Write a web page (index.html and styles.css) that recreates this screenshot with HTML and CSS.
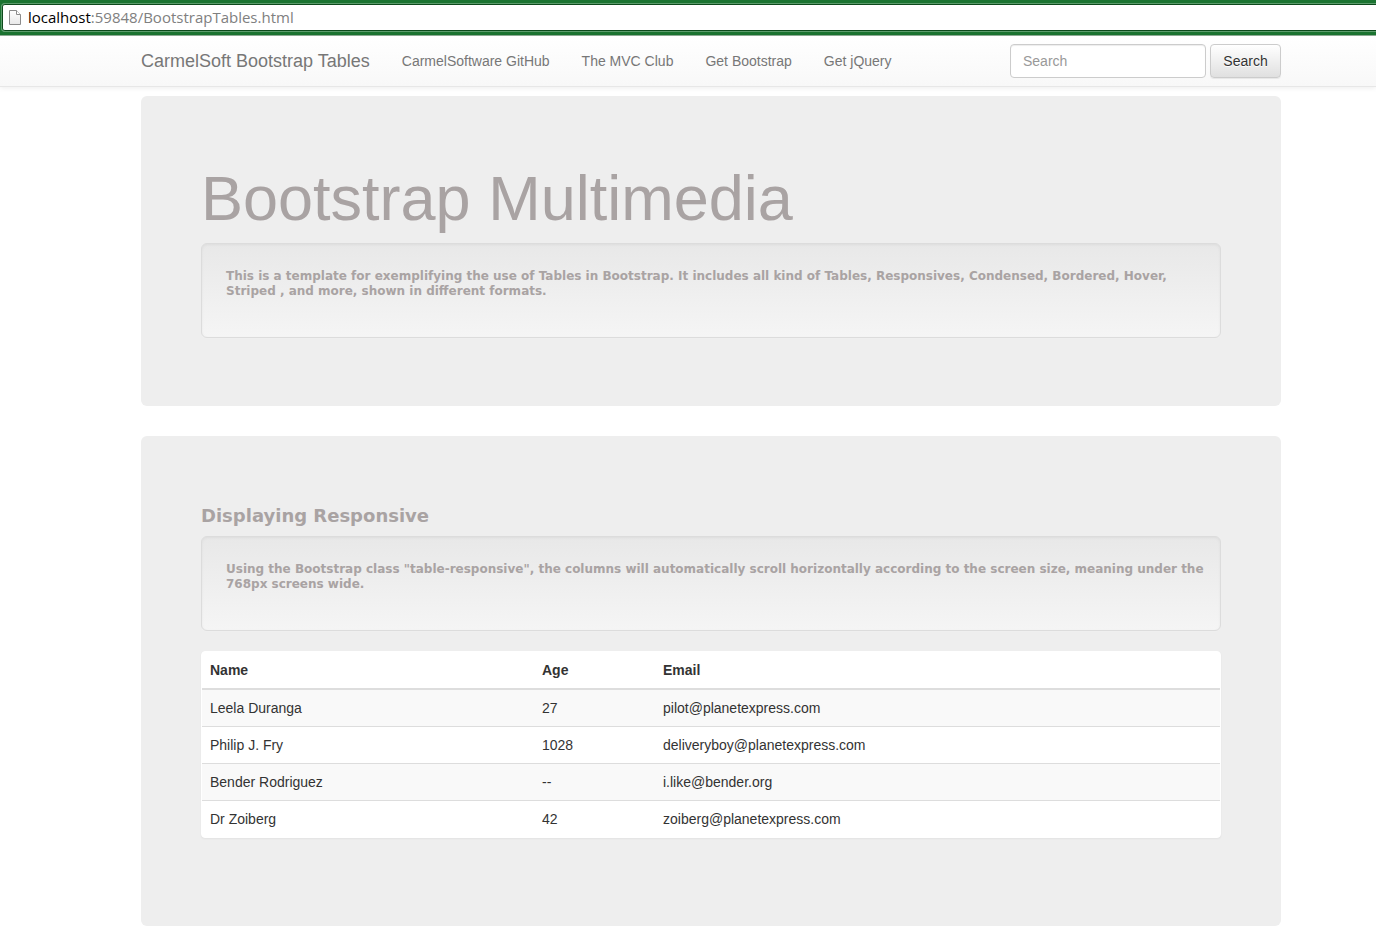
FILE: index.html
```
<!DOCTYPE html>
<html lang="en">
<head>
<meta charset="utf-8">
<title>CarmelSoft Bootstrap Tables</title>
<link rel="stylesheet" href="styles.css">
</head>
<body>
<div class="browser-bar">
  <div class="address">
    <svg class="page-icon" width="12" height="15" viewBox="0 0 12 15" aria-hidden="true">
      <defs><linearGradient id="paper" x1="0" y1="0" x2="0" y2="1"><stop offset="0" stop-color="#fff"/><stop offset="1" stop-color="#e8e8e8"/></linearGradient></defs>
      <path d="M.5.5H7.5L11.5 4.5V14.5H.5Z" fill="url(#paper)" stroke="#8c8c8c"/>
      <path d="M7.5.5V4.5H11.5" fill="#fff" stroke="#8c8c8c"/>
    </svg>
    <span class="url"><span class="host">localhost</span>:59848/BootstrapTables.html</span>
  </div>
</div>
<header class="navbar">
  <nav class="nav-links">
    <a class="brand" href="#">CarmelSoft Bootstrap Tables</a>
    <a href="#">CarmelSoftware GitHub</a>
    <a href="#">The MVC Club</a>
    <a href="#">Get Bootstrap</a>
    <a href="#">Get jQuery</a>
  </nav>
  <form class="search">
    <input type="text" placeholder="Search" aria-label="Search">
    <button type="button">Search</button>
  </form>
</header>
<main class="content">
  <section class="jumbotron">
    <h1>Bootstrap Multimedia</h1>
    <div class="well"><p>This is a template for exemplifying the use of Tables in Bootstrap. It includes all kind of Tables, Responsives, Condensed, Bordered, Hover, Striped , and more, shown in different formats.</p></div>
  </section>
  <section class="jumbotron">
    <h2>Displaying Responsive</h2>
    <div class="well"><p>Using the Bootstrap class "table-responsive", the columns will automatically scroll horizontally according to the screen size, meaning under the 768px screens wide.</p></div>
    <div class="panel">
      <table>
        <thead><tr><th class="col-name">Name</th><th class="col-age">Age</th><th>Email</th></tr></thead>
        <tbody>
          <tr><td>Leela Duranga</td><td>27</td><td>pilot@planetexpress.com</td></tr>
          <tr><td>Philip J. Fry</td><td>1028</td><td>deliveryboy@planetexpress.com</td></tr>
          <tr><td>Bender Rodriguez</td><td>--</td><td>i.like@bender.org</td></tr>
          <tr><td>Dr Zoiberg</td><td>42</td><td>zoiberg@planetexpress.com</td></tr>
        </tbody>
      </table>
    </div>
  </section>
</main>
</body>
</html>
```
FILE: styles.css
```
* { box-sizing: border-box; }
body {
  margin: 0;
  background: #fff;
  color: #333;
  font: 14px/20px "Liberation Sans", Arial, sans-serif;
}
.browser-bar {
  padding: 3px 0 3px 1px;
  background: #1b7431;
  border-bottom: 1px solid #8fae96;
}
.address {
  display: flex;
  align-items: center;
  gap: 7px;
  height: 29px;
  padding: 0 7px 1px;
  background: #fff;
  border: 1px solid #5c9c6c;
  border-right: 0;
  border-radius: 4px 0 0 4px;
  box-shadow: inset 0 1px #0d4a1c, inset 1px 0 #0d4a1c, inset 0 -1px #0d4a1c;
}
.page-icon { display: block; }
.url { font: 15px/24px "Open Sans", "Noto Sans", sans-serif; color: #808080; }
.host { color: #000; }
.navbar {
  display: flex;
  flex-wrap: wrap;
  align-items: center;
  justify-content: space-between;
  min-height: 51px;
  padding: 0 95px 0 141px;
  background: linear-gradient(#fff, #f8f8f8);
  border-bottom: 1px solid #e7e7e7;
  box-shadow: 0 1px 5px rgba(0, 0, 0, .075);
}
.nav-links { display: flex; flex-wrap: wrap; align-items: center; gap: 0 32px; }
.nav-links a { color: #777; text-decoration: none; text-shadow: 0 1px 0 rgba(255, 255, 255, .25); }
.nav-links .brand { font-size: 18px; }
.search { display: flex; gap: 4px; }
.search input, .search button {
  height: 34px;
  padding: 6px 12px;
  border: 1px solid #ccc;
  border-radius: 4px;
  font: inherit;
}
.search input { width: 196px; background: #fff; color: #555; box-shadow: inset 0 1px 1px rgba(0, 0, 0, .075); }
.search input::placeholder { color: #999; opacity: 1; }
.search button {
  min-width: 71px;
  background: linear-gradient(#fff, #e0e0e0);
  color: #333;
  text-shadow: 0 1px 0 #fff;
  box-shadow: inset 0 1px 0 rgba(255, 255, 255, .15), 0 1px 1px rgba(0, 0, 0, .075);
}
.content {
  display: flex;
  flex-direction: column;
  gap: 30px;
  padding: 9px 95px 23px 141px;
}
.jumbotron { padding: 68px 60px; background: #eee; border-radius: 6px; color: #a9a3a3; }
h1 { margin: 0 0 10px; font-size: 63px; line-height: 69px; font-weight: 400; }
h2 { margin: 0 0 8px; font: bold 18px/24px Verdana, "DejaVu Sans", sans-serif; }
.well {
  min-height: 95px;
  padding: 25px 10px 24px 24px;
  border: 1px solid #dcdcdc;
  border-radius: 6px;
  background: linear-gradient(#e8e8e8, #f5f5f5);
  box-shadow: inset 0 1px 3px rgba(0, 0, 0, .05), 0 1px 0 rgba(255, 255, 255, .1);
}
.well p { margin: 0; font: bold 12px/15px Verdana, "DejaVu Sans", sans-serif; }
.panel {
  margin: 20px 0;
  border: 1px solid #fff;
  border-radius: 4px;
  background: #fff;
  color: #333;
  box-shadow: 0 1px 2px rgba(0, 0, 0, .05);
}
table { width: 100%; border-collapse: separate; border-spacing: 0; table-layout: fixed; }
.col-name { width: 332px; }
.col-age { width: 121px; }
th, td { padding: 8px; text-align: left; }
th { border-bottom: 2px solid #ddd; }
td { border-top: 1px solid #ddd; }
tbody tr:first-child td { border-top: 0; }
tbody tr:nth-child(odd) { background: #f9f9f9; }
```
